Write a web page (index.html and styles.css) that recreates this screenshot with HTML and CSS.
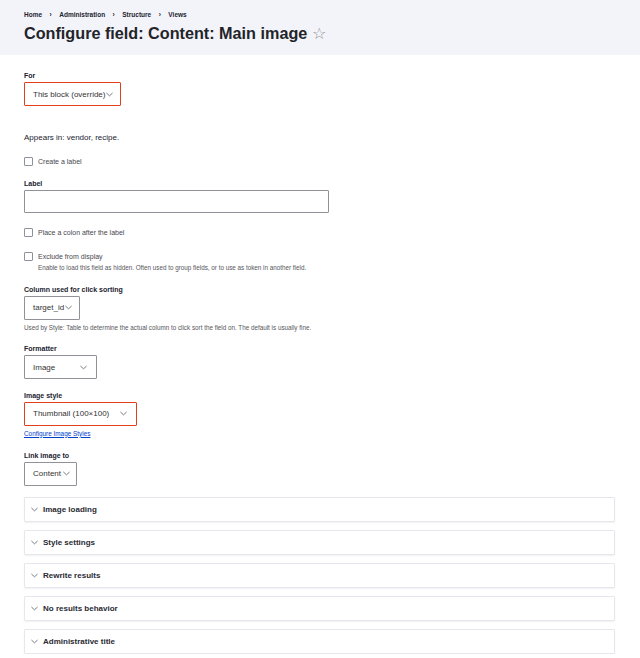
FILE: index.html
```html
<!DOCTYPE html>
<html>
<head>
<meta charset="utf-8">
<link rel="stylesheet" href="styles.css">
</head>
<body>
<header class="page-header">
  <nav class="breadcrumb">
    <span>Home</span><span class="sep">›</span><span>Administration</span><span class="sep">›</span><span>Structure</span><span class="sep">›</span><span>Views</span>
  </nav>
  <h1 class="title">Configure field: Content: Main image <span class="star">☆</span></h1>
</header>
<main class="content">
  <div class="item item-for">
    <div class="label">For</div>
    <div class="select error w-for"><span>This block (override)</span><svg class="chev" viewBox="0 0 8 5"><path d="M0.5 0.8 L4 4 L7.5 0.8"/></svg></div>
  </div>
  <p class="appears">Appears in: vendor, recipe.</p>
  <div class="check c1"><span class="box"></span><span>Create a label</span></div>
  <div class="item item-label">
    <div class="label">Label</div>
    <div class="textinput"></div>
  </div>
  <div class="check c2"><span class="box"></span><span>Place a colon after the label</span></div>
  <div class="check c3"><span class="box"></span><span>Exclude from display</span></div>
  <div class="desc desc-check">Enable to load this field as hidden. Often used to group fields, or to use as token in another field.</div>
  <div class="item item-col">
    <div class="label">Column used for click sorting</div>
    <div class="select w-col"><span>target_id</span><svg class="chev" viewBox="0 0 8 5"><path d="M0.5 0.8 L4 4 L7.5 0.8"/></svg></div>
    <div class="desc">Used by Style: Table to determine the actual column to click sort the field on. The default is usually fine.</div>
  </div>
  <div class="item item-fmt">
    <div class="label">Formatter</div>
    <div class="select w-fmt"><span>Image</span><svg class="chev" viewBox="0 0 8 5"><path d="M0.5 0.8 L4 4 L7.5 0.8"/></svg></div>
  </div>
  <div class="item item-style">
    <div class="label">Image style</div>
    <div class="select error w-style"><span>Thumbnail (100×100)</span><svg class="chev" viewBox="0 0 8 5"><path d="M0.5 0.8 L4 4 L7.5 0.8"/></svg></div>
    <a class="link" href="#">Configure Image Styles</a>
  </div>
  <div class="item item-link">
    <div class="label">Link image to</div>
    <div class="select w-link"><span>Content</span><svg class="chev" viewBox="0 0 8 5"><path d="M0.5 0.8 L4 4 L7.5 0.8"/></svg></div>
  </div>
  <div class="details-list">
    <div class="details"><svg class="dchev" viewBox="0 0 8 5"><path d="M0.5 0.8 L4 4 L7.5 0.8"/></svg><span>Image loading</span></div>
    <div class="details"><svg class="dchev" viewBox="0 0 8 5"><path d="M0.5 0.8 L4 4 L7.5 0.8"/></svg><span>Style settings</span></div>
    <div class="details"><svg class="dchev" viewBox="0 0 8 5"><path d="M0.5 0.8 L4 4 L7.5 0.8"/></svg><span>Rewrite results</span></div>
    <div class="details"><svg class="dchev" viewBox="0 0 8 5"><path d="M0.5 0.8 L4 4 L7.5 0.8"/></svg><span>No results behavior</span></div>
    <div class="details"><svg class="dchev" viewBox="0 0 8 5"><path d="M0.5 0.8 L4 4 L7.5 0.8"/></svg><span>Administrative title</span></div>
  </div>
</main>
</body>
</html>
```

FILE: styles.css
```css
* { box-sizing: border-box; }
html, body { margin: 0; padding: 0; background: #fff; }
body {
  font-family: "Liberation Sans", Arial, sans-serif;
  color: #222330;
  width: 640px;
  overflow: hidden;
}
.page-header {
  background: #f3f4f9;
  height: 55px;
  padding: 11px 24px 0;
}
.breadcrumb {
  font-size: 6.5px;
  font-weight: bold;
  line-height: 8px;
  color: #222330;
  display: flex;
}
.breadcrumb .sep { margin: 0 7.5px; font-weight: bold; }
.title {
  margin: 3px 0 0;
  font-size: 16.2px;
  line-height: 22px;
  font-weight: bold;
  color: #232429;
}
.star { font-weight: normal; color: #8e8f95; font-size: 16px; }
.content { padding: 16px 25px 0 24px; }
.label {
  font-size: 7px;
  font-weight: bold;
  line-height: 9px;
  color: #222330;
}
.select {
  margin-top: 2px;
  height: 24px;
  border: 1px solid #919297;
  border-radius: 1px;
  display: flex;
  align-items: center;
  justify-content: space-between;
  padding: 0 7px 0 8px;
  font-size: 8px;
  color: #333;
  white-space: nowrap;
}
.select.error { border-color: #e0401c; }
.chev { width: 7px; height: 5px; fill: none; stroke: #545560; stroke-width: 0.9; flex: none; }
.w-for { width: 97px; padding-right: 7px; }
.w-for .chev { margin-left: 1px; }
.w-col { width: 56px; }
.w-fmt { width: 73px; padding-right: 9px; }
.w-style { width: 113px; padding-right: 9px; }
.w-link { width: 53px; padding-right: 6px; }
.appears { margin: 27px 0 0; font-size: 8px; line-height: 10px; color: #222330; }
.check { display: flex; align-items: center; height: 10px; font-size: 7px; color: #46474f; }
.check .box { width: 9px; height: 9px; border: 1px solid #8e929c; border-radius: 1px; margin-right: 5px; background: #fff; }
.c1 { margin-top: 13px; }
.item-label { margin-top: 12.5px; }
.textinput { margin-top: 2.5px; width: 305px; height: 23px; border: 1px solid #919297; border-radius: 1px; }
.c2 { margin-top: 14px; }
.c3 { margin-top: 14px; }
.desc { font-size: 6.3px; line-height: 8px; color: #55565b; white-space: nowrap; }
.desc-check { margin-top: 3px; padding-left: 14px; }
.item-col { margin-top: 12.5px; }
.item-col .desc { margin-top: 4px; }
.item-fmt { margin-top: 12.5px; }
.item-style { margin-top: 11.5px; }
.link { display: block; margin-top: 4px; font-size: 6.4px; line-height: 8px; color: #003ecc; text-decoration: underline; }
.item-link { margin-top: 13px; }
.details-list { margin-top: 11px; display: flex; flex-direction: column; gap: 8px; }
.details {
  height: 25px;
  border: 1px solid #e6e7ec;
  border-radius: 1px;
  box-shadow: 0 1px 2px rgba(0,0,0,0.06);
  display: flex;
  align-items: center;
  padding-left: 6px;
  font-size: 8px;
  font-weight: bold;
  color: #2a2b33;
}
.dchev { width: 7px; height: 5px; fill: none; stroke: #545560; stroke-width: 0.9; margin-right: 5px; }
```
